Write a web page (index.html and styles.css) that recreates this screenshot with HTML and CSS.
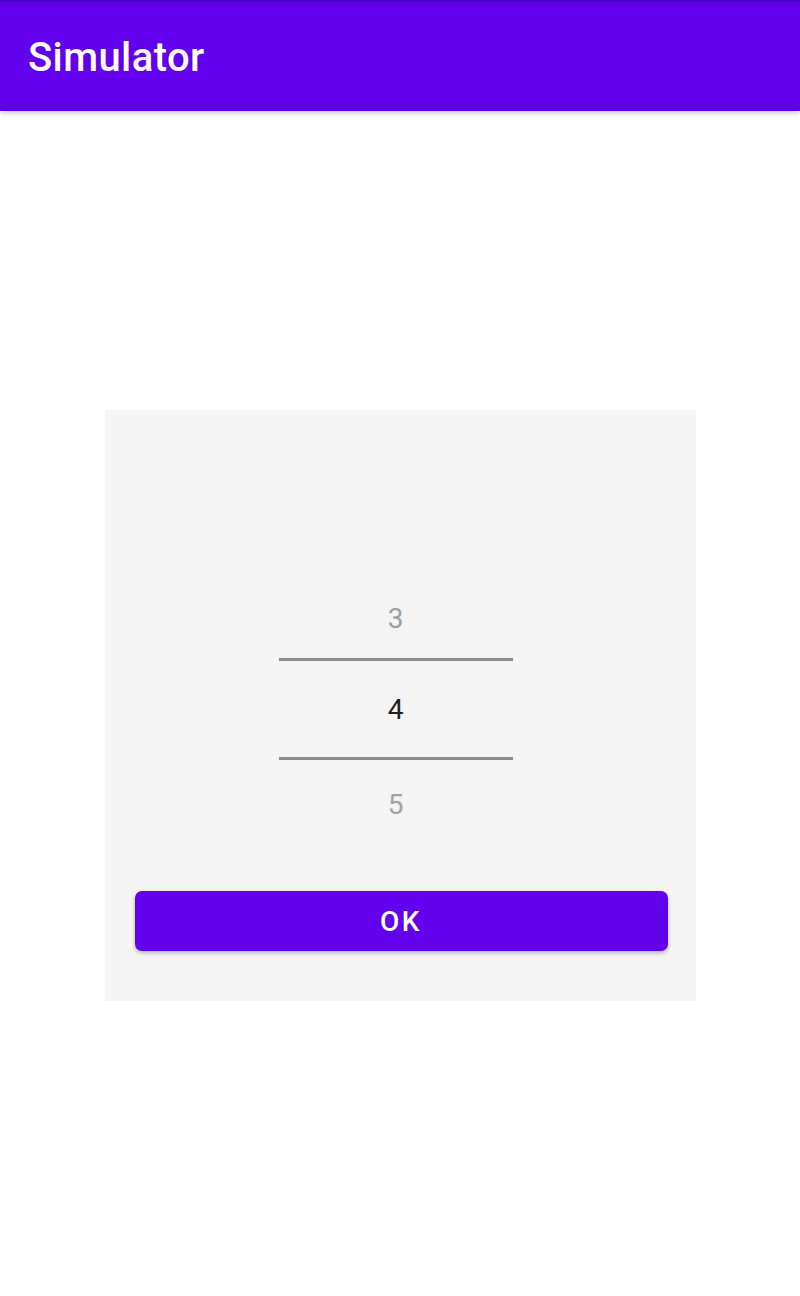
FILE: index.html
```html
<!DOCTYPE html>
<html>
<head>
<meta charset="utf-8">
<link rel="stylesheet" href="styles.css">
</head>
<body>
<header class="appbar"><h1 class="title">Simulator</h1></header>
<main class="content">
  <section class="panel">
    <div class="picker">
      <div class="item item-prev">3</div>
      <div class="divider"></div>
      <div class="item item-current">4</div>
      <div class="divider"></div>
      <div class="item item-next">5</div>
    </div>
    <button class="ok">OK</button>
  </section>
</main>
</body>
</html>
```
FILE: styles.css
```css
html, body {
  margin: 0;
  padding: 0;
  background: #ffffff;
  font-family: Roboto, "Noto Sans", sans-serif;
}
.appbar {
  box-sizing: border-box;
  height: 111px;
  background: #6200ee;
  border-top: 2px solid #4e00c4;
  display: flex;
  align-items: center;
  padding-left: 28px;
  box-shadow: 0 2px 5px rgba(0,0,0,0.22);
  position: relative;
  z-index: 1;
}
.title {
  margin: 0;
  color: #ffffff;
  font-size: 40px;
  font-weight: 500;
  letter-spacing: 0.4px;
  line-height: 1;
  padding-top: 2px;
}
.content {
  display: flex;
  justify-content: center;
  padding-top: 299px;
}
.panel {
  width: 591px;
  box-sizing: border-box;
  background: #f5f5f5;
  padding: 168px 28px 50px 30px;
  display: flex;
  flex-direction: column;
}
.picker {
  width: 234px;
  margin-left: 144px;
  display: flex;
  flex-direction: column;
}
.item {
  font-size: 28px;
  text-align: center;
  display: flex;
  align-items: center;
  justify-content: center;
}
.item-prev { height: 80px; color: #9e9e9e; }
.item-current { height: 96px; color: #1f1f1f; }
.item-next { height: 88px; color: #a3a3a3; }
.divider {
  height: 3px;
  background: #8c8c8c;
}
.ok {
  margin-top: 43px;
  height: 60px;
  border: none;
  border-radius: 7px;
  background: #6200ee;
  color: #ffffff;
  font-family: Roboto, "Noto Sans", sans-serif;
  font-size: 28px;
  font-weight: 500;
  letter-spacing: 2.5px;
  padding: 0;
  box-shadow: 0 2px 4px rgba(0,0,0,0.28);
}
```
